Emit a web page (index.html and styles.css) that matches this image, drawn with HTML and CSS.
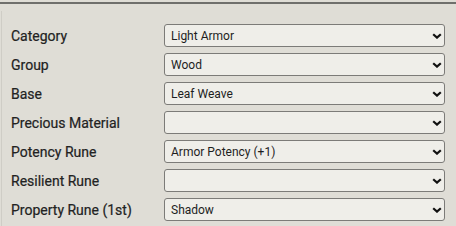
FILE: index.html
```html
<!DOCTYPE html>
<html>
<head>
<meta charset="utf-8">
<link rel="stylesheet" href="styles.css">
</head>
<body>
<div class="topbar"></div>
<div class="panel">
  <div class="form">
    <label class="lbl">Category</label>
    <div class="sel"><span>Light Armor</span><svg viewBox="0 0 10 6"><path d="M1.2 1.2 L5 4.6 L8.8 1.2" /></svg></div>
    <label class="lbl">Group</label>
    <div class="sel"><span>Wood</span><svg viewBox="0 0 10 6"><path d="M1.2 1.2 L5 4.6 L8.8 1.2" /></svg></div>
    <label class="lbl">Base</label>
    <div class="sel"><span>Leaf Weave</span><svg viewBox="0 0 10 6"><path d="M1.2 1.2 L5 4.6 L8.8 1.2" /></svg></div>
    <label class="lbl">Precious Material</label>
    <div class="sel"><span></span><svg viewBox="0 0 10 6"><path d="M1.2 1.2 L5 4.6 L8.8 1.2" /></svg></div>
    <label class="lbl">Potency Rune</label>
    <div class="sel"><span>Armor Potency (+1)</span><svg viewBox="0 0 10 6"><path d="M1.2 1.2 L5 4.6 L8.8 1.2" /></svg></div>
    <label class="lbl">Resilient Rune</label>
    <div class="sel"><span></span><svg viewBox="0 0 10 6"><path d="M1.2 1.2 L5 4.6 L8.8 1.2" /></svg></div>
    <label class="lbl">Property Rune (1st)</label>
    <div class="sel"><span>Shadow</span><svg viewBox="0 0 10 6"><path d="M1.2 1.2 L5 4.6 L8.8 1.2" /></svg></div>
  </div>
</div>
</body>
</html>
```
FILE: styles.css
```css
html, body {
  margin: 0;
  padding: 0;
}
body {
  width: 456px;
  height: 226px;
  overflow: hidden;
  background: #dfddd6;
  font-family: Roboto, "Liberation Sans", sans-serif;
  color: #222;
}
.topbar {
  margin-top: 2px;
  height: 0;
  border-top: 2px solid #6f6f6c;
}
.panel {
  margin-top: 7px;
  margin-left: 1px;
  border-left: 1px solid #cfcdc6;
  height: 220px;
}
.form {
  display: grid;
  grid-template-columns: 153px 281px;
  row-gap: 6px;
  padding-top: 13px;
  padding-left: 9px;
  align-items: center;
}
.lbl {
  font-size: 14px;
  font-weight: 400;
  color: #222;
  -webkit-text-stroke: 0.2px #222;
}
.sel {
  height: 21px;
  border: 1px solid #7c7b78;
  border-radius: 3px;
  background: #efeee9;
  display: flex;
  align-items: center;
  justify-content: space-between;
  padding: 0 2px 0 6px;
  font-size: 12px;
  color: #1e1e1e;
}
.sel svg {
  width: 10px;
  height: 6px;
  fill: none;
  stroke: #111;
  stroke-width: 2.2;
}
```
